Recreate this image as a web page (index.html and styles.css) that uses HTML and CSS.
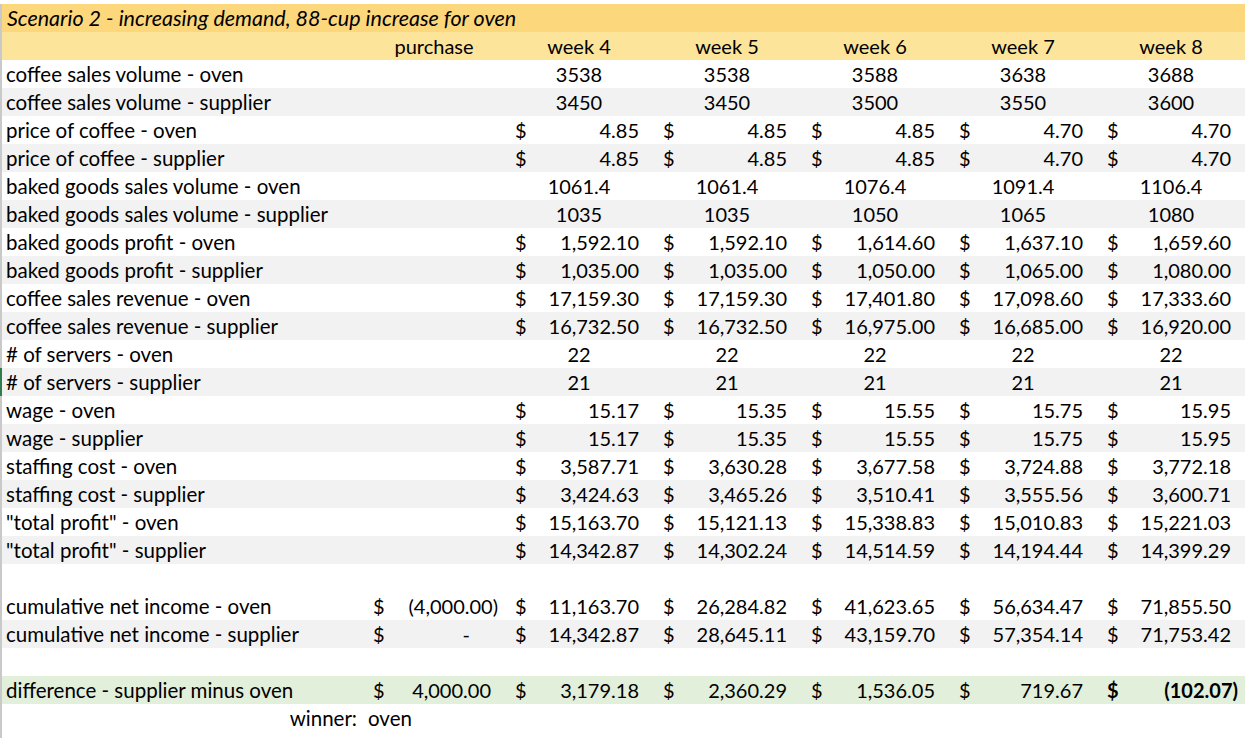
FILE: index.html
```html
<!DOCTYPE html>
<html>
<head>
<meta charset="utf-8">
<title>Scenario 2</title>
<link rel="stylesheet" href="styles.css">
</head>
<body>
<div class="sheet">
  <div class="row title"><div class="lbl span-all">Scenario 2 - increasing demand, 88-cup increase for oven</div></div>
  <div class="row head">
    <div class="lbl"></div>
    <div class="ctr">purchase</div>
    <div class="ctr">week 4</div>
    <div class="ctr">week 5</div>
    <div class="ctr">week 6</div>
    <div class="ctr">week 7</div>
    <div class="ctr">week 8</div>
  </div>

  <div class="row">
    <div class="lbl">coffee sales volume - oven</div><div></div>
    <div class="ctr">3538</div><div class="ctr">3538</div><div class="ctr">3588</div><div class="ctr">3638</div><div class="ctr">3688</div>
  </div>
  <div class="row alt">
    <div class="lbl">coffee sales volume - supplier</div><div></div>
    <div class="ctr">3450</div><div class="ctr">3450</div><div class="ctr">3500</div><div class="ctr">3550</div><div class="ctr">3600</div>
  </div>
  <div class="row">
    <div class="lbl">price of coffee - oven</div><div></div>
    <div class="acc"><span>$</span><span>4.85<i class="p"></i></span></div>
    <div class="acc"><span>$</span><span>4.85<i class="p"></i></span></div>
    <div class="acc"><span>$</span><span>4.85<i class="p"></i></span></div>
    <div class="acc"><span>$</span><span>4.70<i class="p"></i></span></div>
    <div class="acc"><span>$</span><span>4.70<i class="p"></i></span></div>
  </div>
  <div class="row alt">
    <div class="lbl">price of coffee - supplier</div><div></div>
    <div class="acc"><span>$</span><span>4.85<i class="p"></i></span></div>
    <div class="acc"><span>$</span><span>4.85<i class="p"></i></span></div>
    <div class="acc"><span>$</span><span>4.85<i class="p"></i></span></div>
    <div class="acc"><span>$</span><span>4.70<i class="p"></i></span></div>
    <div class="acc"><span>$</span><span>4.70<i class="p"></i></span></div>
  </div>
  <div class="row">
    <div class="lbl">baked goods sales volume - oven</div><div></div>
    <div class="ctr">1061.4</div><div class="ctr">1061.4</div><div class="ctr">1076.4</div><div class="ctr">1091.4</div><div class="ctr">1106.4</div>
  </div>
  <div class="row alt">
    <div class="lbl">baked goods sales volume - supplier</div><div></div>
    <div class="ctr">1035</div><div class="ctr">1035</div><div class="ctr">1050</div><div class="ctr">1065</div><div class="ctr">1080</div>
  </div>
  <div class="row">
    <div class="lbl">baked goods profit - oven</div><div></div>
    <div class="acc"><span>$</span><span>1,592.10<i class="p"></i></span></div>
    <div class="acc"><span>$</span><span>1,592.10<i class="p"></i></span></div>
    <div class="acc"><span>$</span><span>1,614.60<i class="p"></i></span></div>
    <div class="acc"><span>$</span><span>1,637.10<i class="p"></i></span></div>
    <div class="acc"><span>$</span><span>1,659.60<i class="p"></i></span></div>
  </div>
  <div class="row alt">
    <div class="lbl">baked goods profit - supplier</div><div></div>
    <div class="acc"><span>$</span><span>1,035.00<i class="p"></i></span></div>
    <div class="acc"><span>$</span><span>1,035.00<i class="p"></i></span></div>
    <div class="acc"><span>$</span><span>1,050.00<i class="p"></i></span></div>
    <div class="acc"><span>$</span><span>1,065.00<i class="p"></i></span></div>
    <div class="acc"><span>$</span><span>1,080.00<i class="p"></i></span></div>
  </div>
  <div class="row">
    <div class="lbl">coffee sales revenue - oven</div><div></div>
    <div class="acc"><span>$</span><span>17,159.30<i class="p"></i></span></div>
    <div class="acc"><span>$</span><span>17,159.30<i class="p"></i></span></div>
    <div class="acc"><span>$</span><span>17,401.80<i class="p"></i></span></div>
    <div class="acc"><span>$</span><span>17,098.60<i class="p"></i></span></div>
    <div class="acc"><span>$</span><span>17,333.60<i class="p"></i></span></div>
  </div>
  <div class="row alt">
    <div class="lbl">coffee sales revenue - supplier</div><div></div>
    <div class="acc"><span>$</span><span>16,732.50<i class="p"></i></span></div>
    <div class="acc"><span>$</span><span>16,732.50<i class="p"></i></span></div>
    <div class="acc"><span>$</span><span>16,975.00<i class="p"></i></span></div>
    <div class="acc"><span>$</span><span>16,685.00<i class="p"></i></span></div>
    <div class="acc"><span>$</span><span>16,920.00<i class="p"></i></span></div>
  </div>
  <div class="row">
    <div class="lbl"># of servers - oven</div><div></div>
    <div class="ctr">22</div><div class="ctr">22</div><div class="ctr">22</div><div class="ctr">22</div><div class="ctr">22</div>
  </div>
  <div class="row alt selected">
    <div class="lbl"># of servers - supplier</div><div></div>
    <div class="ctr">21</div><div class="ctr">21</div><div class="ctr">21</div><div class="ctr">21</div><div class="ctr">21</div>
  </div>
  <div class="row">
    <div class="lbl">wage - oven</div><div></div>
    <div class="acc"><span>$</span><span>15.17<i class="p"></i></span></div>
    <div class="acc"><span>$</span><span>15.35<i class="p"></i></span></div>
    <div class="acc"><span>$</span><span>15.55<i class="p"></i></span></div>
    <div class="acc"><span>$</span><span>15.75<i class="p"></i></span></div>
    <div class="acc"><span>$</span><span>15.95<i class="p"></i></span></div>
  </div>
  <div class="row alt">
    <div class="lbl">wage - supplier</div><div></div>
    <div class="acc"><span>$</span><span>15.17<i class="p"></i></span></div>
    <div class="acc"><span>$</span><span>15.35<i class="p"></i></span></div>
    <div class="acc"><span>$</span><span>15.55<i class="p"></i></span></div>
    <div class="acc"><span>$</span><span>15.75<i class="p"></i></span></div>
    <div class="acc"><span>$</span><span>15.95<i class="p"></i></span></div>
  </div>
  <div class="row">
    <div class="lbl">staffing cost - oven</div><div></div>
    <div class="acc"><span>$</span><span>3,587.71<i class="p"></i></span></div>
    <div class="acc"><span>$</span><span>3,630.28<i class="p"></i></span></div>
    <div class="acc"><span>$</span><span>3,677.58<i class="p"></i></span></div>
    <div class="acc"><span>$</span><span>3,724.88<i class="p"></i></span></div>
    <div class="acc"><span>$</span><span>3,772.18<i class="p"></i></span></div>
  </div>
  <div class="row alt">
    <div class="lbl">staffing cost - supplier</div><div></div>
    <div class="acc"><span>$</span><span>3,424.63<i class="p"></i></span></div>
    <div class="acc"><span>$</span><span>3,465.26<i class="p"></i></span></div>
    <div class="acc"><span>$</span><span>3,510.41<i class="p"></i></span></div>
    <div class="acc"><span>$</span><span>3,555.56<i class="p"></i></span></div>
    <div class="acc"><span>$</span><span>3,600.71<i class="p"></i></span></div>
  </div>
  <div class="row">
    <div class="lbl">"total profit" - oven</div><div></div>
    <div class="acc"><span>$</span><span>15,163.70<i class="p"></i></span></div>
    <div class="acc"><span>$</span><span>15,121.13<i class="p"></i></span></div>
    <div class="acc"><span>$</span><span>15,338.83<i class="p"></i></span></div>
    <div class="acc"><span>$</span><span>15,010.83<i class="p"></i></span></div>
    <div class="acc"><span>$</span><span>15,221.03<i class="p"></i></span></div>
  </div>
  <div class="row alt">
    <div class="lbl">"total profit" - supplier</div><div></div>
    <div class="acc"><span>$</span><span>14,342.87<i class="p"></i></span></div>
    <div class="acc"><span>$</span><span>14,302.24<i class="p"></i></span></div>
    <div class="acc"><span>$</span><span>14,514.59<i class="p"></i></span></div>
    <div class="acc"><span>$</span><span>14,194.44<i class="p"></i></span></div>
    <div class="acc"><span>$</span><span>14,399.29<i class="p"></i></span></div>
  </div>

  <div class="row"></div>

  <div class="row">
    <div class="lbl">cumulative net income - oven</div>
    <div class="acc"><span>$</span><span>(4,000.00)</span></div>
    <div class="acc"><span>$</span><span>11,163.70<i class="p"></i></span></div>
    <div class="acc"><span>$</span><span>26,284.82<i class="p"></i></span></div>
    <div class="acc"><span>$</span><span>41,623.65<i class="p"></i></span></div>
    <div class="acc"><span>$</span><span>56,634.47<i class="p"></i></span></div>
    <div class="acc"><span>$</span><span>71,855.50<i class="p"></i></span></div>
  </div>
  <div class="row alt">
    <div class="lbl">cumulative net income - supplier</div>
    <div class="acc"><span>$</span><span class="dash">-</span></div>
    <div class="acc"><span>$</span><span>14,342.87<i class="p"></i></span></div>
    <div class="acc"><span>$</span><span>28,645.11<i class="p"></i></span></div>
    <div class="acc"><span>$</span><span>43,159.70<i class="p"></i></span></div>
    <div class="acc"><span>$</span><span>57,354.14<i class="p"></i></span></div>
    <div class="acc"><span>$</span><span>71,753.42<i class="p"></i></span></div>
  </div>

  <div class="row"></div>

  <div class="row diff">
    <div class="lbl">difference - supplier minus oven</div>
    <div class="acc"><span>$</span><span>4,000.00<i class="p"></i></span></div>
    <div class="acc"><span>$</span><span>3,179.18<i class="p"></i></span></div>
    <div class="acc"><span>$</span><span>2,360.29<i class="p"></i></span></div>
    <div class="acc"><span>$</span><span>1,536.05<i class="p"></i></span></div>
    <div class="acc"><span>$</span><span>719.67<i class="p"></i></span></div>
    <div class="acc bold"><span>$</span><span>(102.07)</span></div>
  </div>
  <div class="row">
    <div class="lbl right">winner:</div>
    <div class="left">oven</div>
  </div>
</div>
</body>
</html>
```

FILE: styles.css
```css
html, body {
  margin: 0;
  padding: 0;
  background: #ffffff;
}

body {
  font-family: Lato, "Open Sans", "Liberation Sans", sans-serif;
  font-size: 20px;
  color: #000000;
}

.sheet {
  margin-top: 4px;
  border-left: 2px solid #c9c9c9;
  min-height: 734px;
  box-sizing: border-box;
  width: 1245px;
}

.row {
  display: grid;
  grid-template-columns: 361px 142px repeat(5, 148px);
  height: 28px;
  line-height: 28px;
  white-space: nowrap;
}

.row.alt {
  background: #f2f2f2;
}

.row.title {
  background: #fcd77c;
  font-style: italic;
}

.row.title .lbl {
  font-size: 21.5px;
}

.row.head {
  background: #fde49b;
}

.row.diff {
  background: #e2efda;
}

.row.selected {
  margin-left: -2px;
  border-left: 2px solid #2f7d4f;
}

.lbl {
  padding-left: 4px;
  font-size: 20.5px;
}

.span-all {
  grid-column: 1 / -1;
  padding-left: 5px;
}

.lbl.right {
  text-align: right;
  padding-right: 6px;
}

.left {
  padding-left: 5px;
  font-size: 20.5px;
}

.ctr {
  text-align: center;
}

.acc {
  display: flex;
  justify-content: space-between;
  padding-left: 10px;
  padding-right: 7px;
}

.acc .p {
  display: inline-block;
  width: 7px;
}

.acc .dash {
  padding-right: 28px;
}

.acc.bold {
  font-weight: bold;
}
```
